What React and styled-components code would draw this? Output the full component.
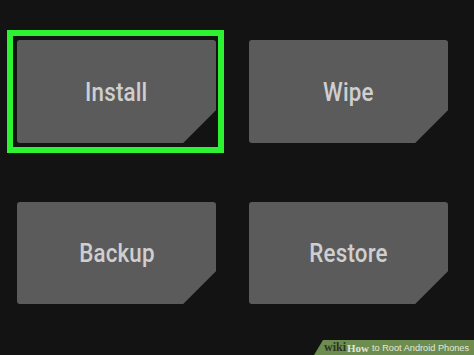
import styled, { createGlobalStyle } from "styled-components";

const GlobalStyle = createGlobalStyle`
  html, body {
    margin: 0;
    padding: 0;
    background: #131314;
  }
  body {
    width: 474px;
    height: 355px;
    overflow: hidden;
    font-family: Roboto, "Liberation Sans", sans-serif;
  }
`;

const Screen = styled.div`
  position: relative;
  width: 474px;
  height: 355px;
  background: #131314;
  box-sizing: border-box;
  padding: 30px 0 0 7px;
`;

const Grid = styled.div`
  display: grid;
  grid-template-columns: 217px 217px;
  column-gap: 15px;
  row-gap: 39px;
`;

const Cell = styled.div`
  box-sizing: border-box;
  width: 217px;
  padding: 4px 2px 4px 4px;
  border: 6px solid ${(p) => (p.$selected ? "#2cf232" : "transparent")};
`;

const Tile = styled.div`
  width: 199px;
  height: ${(p) => p.$h}px;
  border-radius: 3px;
  background: linear-gradient(315deg, transparent 23px, #5b5b5c 23.5px);
  display: flex;
  align-items: center;
  justify-content: center;
`;

const Label = styled.span`
  display: inline-block;
  font-size: 26px;
  font-weight: 500;
  color: #cfcfcf;
  transform: scaleX(0.86);
  letter-spacing: 0.2px;
`;

const Badge = styled.div`
  position: absolute;
  right: 0;
  bottom: 0;
  width: 160px;
  height: 15px;
  background: #6c8c50;
  clip-path: polygon(9px 0, 100% 0, 100% 100%, 0 100%);
  display: flex;
  align-items: center;
  padding-left: 10px;
  box-sizing: border-box;
  white-space: nowrap;
  overflow: hidden;
`;

const Wiki = styled.span`
  font-family: "Liberation Serif", serif;
  font-weight: bold;
  font-size: 12px;
  color: #2b3522;
  margin-right: 1px;
`;

const How = styled.span`
  font-family: "Liberation Serif", serif;
  font-weight: bold;
  font-size: 11px;
  color: #dfe7d6;
  margin-right: 3px;
`;

const Caption = styled.span`
  font-family: "Liberation Sans", Arial, sans-serif;
  font-size: 9.2px;
  color: #e2e9da;
`;

const buttons = [
  { label: "Install", selected: true, h: 103 },
  { label: "Wipe", h: 103 },
  { label: "Backup", h: 102 },
  { label: "Restore", h: 102 },
];

export default function App() {
  return (
    <>
      <GlobalStyle />
      <Screen>
        <Grid>
          {buttons.map((b) => (
            <Cell key={b.label} $selected={b.selected}>
              <Tile $h={b.h}>
                <Label>{b.label}</Label>
              </Tile>
            </Cell>
          ))}
        </Grid>
        <Badge>
          <Wiki>wiki</Wiki>
          <How>How</How>
          <Caption>to Root Android Phones</Caption>
        </Badge>
      </Screen>
    </>
  );
}
